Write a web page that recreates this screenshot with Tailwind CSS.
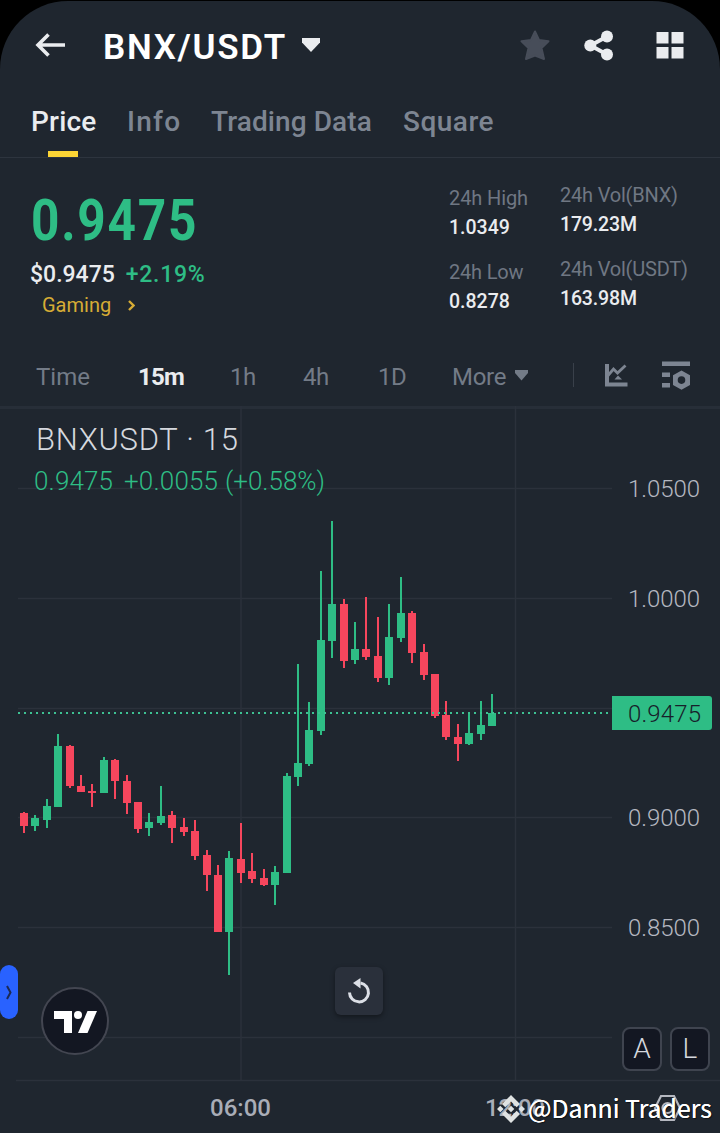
<!DOCTYPE html>
<html lang="en">
<head>
    <meta charset="UTF-8">
    <meta name="viewport" content="width=device-width, initial-scale=1.0">
    <title>BNX/USDT</title>
    <script src="https://cdn.jsdelivr.net/npm/@tailwindcss/browser@4"></script>
</head>
<body class="bg-black font-['Roboto',sans-serif]">
<div class="relative w-[720px] h-[1133px] pt-px overflow-hidden">
<div class="h-[1132px] bg-[#1f262f] rounded-t-[68px] overflow-hidden flex flex-col">

    <!-- Header -->
    <header class="h-[88px] shrink-0 pl-[35px] pr-[36px] flex items-center">
        <svg class="w-[30px] h-6" viewBox="0 0 30 24" fill="none" stroke="#eaecef" stroke-width="3.6">
            <path d="M30 12H3M13.500 1.500L3 12l10.500 10.500" />
        </svg>
        <h1 class="ml-[38px] w-[183px] whitespace-nowrap text-[35px] leading-10 font-semibold tracking-[1.7px] text-white pt-[5px]">BNX/USDT</h1>
        <svg class="ml-4 w-[18px] h-[14px]" viewBox="0 0 18 14" fill="#eaecef"><path d="M0 0h18v4.500L9 14 0 4.500z" /></svg>
        <svg class="ml-auto w-[30px] h-[30px]" viewBox="0 0 30 30" fill="#474d59" stroke="#474d59" stroke-width="2" stroke-linejoin="round">
            <path d="M15 1.500l4 8.500 9.500 1.200-7 6.800 2.500 11L15 25.500l-9 3.500 2.500-11-7-6.800L11 10z" />
        </svg>
        <svg class="ml-[34px] w-[30px] h-[31px]" viewBox="0 0 30 31" fill="#eaecef">
            <path d="M6.500 15.500L23 6.500M6.500 15.500L23 24.500" stroke="#eaecef" stroke-width="4" />
            <circle cx="6.300" cy="15.500" r="6" /><circle cx="23" cy="6.500" r="6" /><circle cx="23" cy="24.500" r="6" />
        </svg>
        <svg class="ml-[42px] w-[28px] h-[27px]" viewBox="0 0 28 27" fill="#eaecef">
            <path d="M0.500 0h12v11.500h-12zM15.500 0h12v11.500h-12zM0.500 15h12v11.500h-12zM15.500 15h12v11.500h-12z" />
        </svg>
    </header>

    <!-- Tabs -->
    <nav class="h-[69px] shrink-0 pl-[31px] pt-[15px] grid grid-cols-[96px_84px_192px_1fr] border-b border-[#2d343e] text-[28px] leading-9 font-medium text-[#7d8592] whitespace-nowrap">
        <a class="relative tracking-[0.2px] text-[#eaecef]">Price<span class="absolute left-[17px] top-[47px] w-[30px] h-[6px] bg-[#fcd535]"></span></a>
        <a class="tracking-[1.3px]">Info</a>
        <a class="tracking-[0.1px]">Trading Data</a>
        <a class="tracking-[0.5px]">Square</a>
    </nav>

    <!-- Ticker -->
    <section class="h-[178px] shrink-0 flex">
        <div class="w-[449px] pl-[31px] pt-[32px]">
            <div class="h-[60px] text-[57px] leading-[61px] font-bold tracking-[2px] origin-left scale-x-[0.87] text-[#2ebd85]">0.9475</div>
            <div class="mt-[10px] h-[30px] flex gap-[11px] text-[23px] leading-[30px] font-medium">
                <span class="-ml-px text-[#eaecef]">$0.9475</span>
                <span class="tracking-[0.7px] text-[#2ebd85]">+2.19%</span>
            </div>
            <div class="h-[30px] pl-[11px] flex items-center text-[20px] text-[#d6ac35]">
                <span>Gaming</span>
                <svg class="ml-[17px] w-[7px] h-[11px]" viewBox="0 0 7 11" fill="none" stroke="#d6ac35" stroke-width="2.400"><path d="M1 1l4.500 4.500L1 10" /></svg>
            </div>
        </div>
        <div class="w-[111px] pt-[27px] text-[20px] leading-[26px] whitespace-nowrap">
            <div class="text-[#6f7783] tracking-[-0.1px]">24h High</div>
            <div class="mt-[4px] text-[#eaecef] text-[19.5px] font-medium">1.0349</div>
            <div class="mt-[18px] text-[#6f7783] tracking-[-0.2px]">24h Low</div>
            <div class="mt-[4px] text-[#eaecef] text-[19.5px] font-medium">0.8278</div>
        </div>
        <div class="pt-[24px] text-[20px] leading-[26px] whitespace-nowrap">
            <div class="text-[#6f7783] tracking-[-0.2px]">24h Vol(BNX)</div>
            <div class="mt-[4px] text-[#eaecef] text-[19.5px] tracking-[-0.15px] font-medium">179.23M</div>
            <div class="mt-[18px] text-[#6f7783] tracking-[-0.2px]">24h Vol(USDT)</div>
            <div class="mt-[4px] text-[#eaecef] text-[19.5px] tracking-[-0.15px] font-medium">163.98M</div>
        </div>
    </section>

    <!-- Intervals -->
    <nav class="h-[70px] shrink-0 pl-9 flex text-[24px] leading-[30px] text-[#737b87] whitespace-nowrap pt-[26px]">
        <span class="w-[102px]">Time</span>
        <span class="w-[92px] tracking-[-0.8px] font-bold text-[#eaecef]">15m</span>
        <span class="w-[73px] tracking-[-0.5px]">1h</span>
        <span class="w-[75px] tracking-[-0.4px]">4h</span>
        <span class="w-[74px] tracking-[-0.6px]">1D</span>
        <span class="w-[63px] tracking-[-0.3px]">More</span>
        <svg class="mt-[8px] w-[13px] h-[11px]" viewBox="0 0 13 11" fill="#737b87"><path d="M0 0h13v3L6.500 10.500 0 3z" /></svg>
        <span class="ml-[45px] mt-[1px] w-px h-6 bg-[#39404a]"></span>
        <svg class="ml-[31px] mt-[2px] w-[23px] h-[23px]" viewBox="0 0 23 23" fill="#7d8592">
            <path d="M0 0h4v18.500h18.500V22.500H0z" />
            <path d="M3 11.500L8.500 5l4 4 8-7.500" fill="none" stroke="#7d8592" stroke-width="2.800" />
            <path d="M9.500 15.500L13 11.500l4 4z" />
        </svg>
        <svg class="ml-[34px] -mt-px w-[29px] h-[29px]" viewBox="0 0 29 29" fill="#7d8592">
            <path d="M0 0.500h28v4.500H0zM0 11.500h8v4.500H0zM0 22h8v4.500H0z" />
            <path fill-rule="evenodd" d="M19.500 9.500l8.500 4.800v9.600l-8.500 4.800-8.500-4.800v-9.600zM19.500 15.300a3.800 3.800 0 100 7.600 3.800 3.800 0 000-7.600z" />
        </svg>
    </nav>

    <!-- Chart -->
    <main class="relative h-[727px] shrink-0">
        <svg class="block w-[720px] h-[727px]" viewBox="0 406 720 727">
            <path d="M0 407.500H720" stroke="#272e38" stroke-width="3" />
            <g stroke="#2b313b" stroke-width="1.500">
                <path d="M18 488.500H612M18 598.500H612M18 708.500H612M18 817.500H612M18 927.500H612M18 1037.500H612M16 1080.500H720" />
                <path d="M241 406V1080M515.500 406V1080" />
            </g>
            <g id="candles"></g>
            <path d="M18 713H612" stroke="#3ec193" stroke-width="2" stroke-dasharray="2 4" />

            <text x="36" y="450" font-size="31" font-weight="300" fill="#d5d8de" textLength="202">BNXUSDT · 15</text>
            <g font-size="26" font-weight="300" fill="#2ebd85">
                <text x="34" y="490" textLength="79">0.9475</text>
                <text x="124" y="490" textLength="94">+0.0055</text>
                <text x="225" y="490" textLength="100">(+0.58%)</text>
            </g>

            <path d="M612 696h97a3 3 0 013 3v28a3 3 0 01-3 3h-97z" fill="#2ebd85" />
            <g font-size="24" fill="#b5b8c1" font-weight="300">
                <text x="628" y="497" textLength="72">1.0500</text>
                <text x="628" y="607" textLength="72">1.0000</text>
                <text x="628" y="722" textLength="73" fill="#17202a">0.9475</text>
                <text x="628" y="826" textLength="72">0.9000</text>
                <text x="628" y="936" textLength="72">0.8500</text>
            </g>
            <g font-size="24" fill="#a9adb7" font-weight="500">
                <text x="210" y="1116" textLength="61">06:00</text>
                <text x="485" y="1116" textLength="60">12:00</text>
            </g>
            <!-- axis settings -->
            <g fill="none" stroke="#b5b8c0" stroke-width="2.200">
                <path d="M661 1096h13l6 12-6 12h-13l-6-12z" />
                <circle cx="667.500" cy="1108" r="5" />
            </g>
        </svg>

        <div class="absolute left-0 top-[559px] w-[18px] h-[54px] rounded-[9px] bg-[#2962ff] flex items-center justify-center">
            <svg class="w-[6px] h-[15px]" viewBox="0 0 6 15" fill="none" stroke="#1b2a55" stroke-width="2"><path d="M1 1l3.500 6.500L1 14" /></svg>
        </div>

        <div class="absolute left-[41px] top-[581px] w-[68px] h-[68px] rounded-full border-2 border-[#434651] bg-[#131722]">
            <svg class="w-16 h-16" viewBox="43 989 64 64" fill="#fff">
                <path d="M54 1011h18v22h-8v-14H54z" /><circle cx="78" cy="1015" r="4" /><path d="M87.500 1011H97l-9.500 22H78z" />
            </svg>
        </div>

        <button class="absolute left-[335px] top-[561px] w-12 h-12 rounded-md bg-[#2a303b] shadow-[0_2px_5px_#0006] flex items-center justify-center">
            <svg class="w-6 h-7" viewBox="0 0 24 28" fill="none">
                <path d="M2.500 15.500a9.500 9.500 0 1011-9.500" stroke="#dcdfe6" stroke-width="3" />
                <path d="M13.500 1v10.500L6 6z" fill="#dcdfe6" />
            </svg>
        </button>

        <div class="absolute left-[622px] top-[621px] flex gap-2 text-[28px] font-light text-[#d5d8de]">
            <div class="w-10 h-11 rounded-lg border-2 border-[#3f444f] bg-[#131722] flex items-center justify-center">A</div>
            <div class="w-10 h-11 rounded-lg border-2 border-[#3f444f] bg-[#131722] flex items-center justify-center">L</div>
        </div>

        <!-- Watermark -->
        <div class="absolute left-[497px] top-[685px] flex items-center h-9 whitespace-nowrap">
            <svg class="w-7 h-7" viewBox="0 0 28 28" fill="#dfe2e2">
                <path d="M14 0l9 9-3.300 3.300L14 6.600l-5.700 5.700L5 9zM14 28l9-9-3.300-3.300L14 21.400l-5.700-5.700L5 19zM14 10.700l3.300 3.300-3.300 3.300-3.300-3.300zM3.300 10.700L6.600 14l-3.300 3.300L0 14zM24.700 10.700L28 14l-3.300 3.300-3.300-3.300z" />
            </svg>
            <span class="ml-[3px] -mt-[4px] text-[24.8px] leading-9 text-white font-['Noto_Sans_CJK_SC',sans-serif] [text-shadow:0_0_0.5px_#fff,1px_1px_1px_#0008]">@Danni Traders</span>
        </div>
    </main>
</div>
</div>

<script>
    // [center x, wick top, body top, body bottom, wick bottom, up]
    const candles = [
        [24, 812, 813, 826, 833, 0], [35, 815, 818, 826, 831, 1], [47, 799, 806, 820, 828, 1],
        [58, 734, 746, 807, 807, 1], [70, 745, 746, 786, 788, 0], [81, 775, 786, 792, 792, 0],
        [92, 784, 791, 793, 807, 0], [104, 757, 760, 793, 793, 1], [115, 759, 760, 781, 799, 0],
        [127, 775, 781, 803, 814, 0], [138, 802, 802, 829, 833, 0], [149, 813, 822, 828, 836, 1],
        [161, 786, 816, 823, 825, 1], [172, 811, 815, 828, 843, 0], [184, 818, 827, 832, 836, 0],
        [195, 820, 831, 856, 860, 0], [207, 850, 855, 875, 891, 0], [218, 865, 875, 932, 932, 0],
        [229, 851, 858, 932, 975, 1], [241, 823, 859, 873, 883, 0], [252, 853, 871, 879, 883, 0],
        [264, 869, 878, 885, 886, 0], [275, 866, 872, 885, 905, 1], [287, 773, 776, 873, 873, 1],
        [298, 664, 763, 777, 786, 1], [309, 702, 730, 764, 766, 1], [321, 571, 640, 731, 735, 1],
        [332, 521, 604, 641, 658, 1], [344, 599, 604, 661, 668, 0], [355, 622, 649, 660, 664, 1],
        [366, 597, 649, 657, 660, 0], [378, 617, 656, 678, 682, 0], [389, 604, 637, 678, 685, 1],
        [401, 577, 613, 638, 642, 1], [412, 611, 613, 653, 663, 0], [424, 644, 652, 675, 680, 0],
        [435, 674, 674, 716, 718, 0], [446, 701, 715, 737, 740, 0], [458, 724, 737, 744, 761, 0],
        [469, 712, 733, 744, 745, 1], [481, 701, 725, 734, 740, 1], [492, 694, 713, 726, 726, 1]
    ];

    document.getElementById('candles').innerHTML = candles.map(([x, high, top, bottom, low, up]) => `
        <g fill="${up ? '#2ebd85' : '#f6465d'}">
            <rect x="${x - 1}" y="${high}" width="2" height="${low - high}" />
            <rect x="${x - 4}" y="${top}" width="8" height="${bottom - top}" />
        </g>
    `).join('');
</script>
</body>
</html>
